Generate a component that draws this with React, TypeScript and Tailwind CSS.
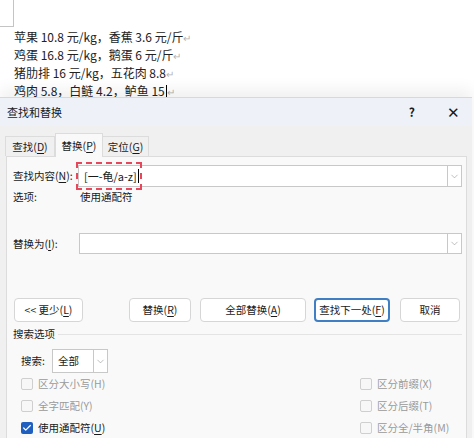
import { Check, ChevronDown } from "lucide-react";

const font = { fontFamily: '"Noto Sans CJK SC", "Noto Sans", sans-serif' };

const docLines = [
  "苹果 10.8 元/kg，香蕉 3.6 元/斤",
  "鸡蛋 16.8 元/kg，鹅蛋 6 元/斤",
  "猪肋排 16 元/kg，五花肉 8.8",
];

function Key({ k }: { k: string }) {
  return (
    <>
      (<span className="underline underline-offset-2">{k}</span>)
    </>
  );
}

function Chevron({ className = "" }: { className?: string }) {
  return (
    <div className={`flex items-center justify-center border-l border-[#c8c8c8] ${className}`}>
      <ChevronDown size={11} strokeWidth={1.2} className="text-[#8a8a8a]" />
    </div>
  );
}

function Btn({ w, ml, focus, children }: { w: string; ml: string; focus?: boolean; children: React.ReactNode }) {
  return (
    <div
      className={`${w} ${ml} flex h-[24px] items-center justify-center whitespace-nowrap rounded-[4px] bg-white ${
        focus ? "border-2 border-[#3f7fc4]" : "border border-[#d6d6d6]"
      }`}
    >
      {children}
    </div>
  );
}

function Box({ label, checked, disabled }: { label: React.ReactNode; checked?: boolean; disabled?: boolean }) {
  return (
    <div className="flex h-[22px] items-center gap-[5px] whitespace-nowrap">
      {checked ? (
        <div className="flex h-[12px] w-[12px] items-center justify-center rounded-[2px] bg-[#1f5fbf]">
          <Check size={10} strokeWidth={3} className="text-white" />
        </div>
      ) : (
        <div className="h-[12px] w-[12px] rounded-[2px] border border-[#cfcfcf] bg-[#f7f7f7]" />
      )}
      <span className={disabled ? "text-[#9a9a9a]" : "text-[#1a1a1a]"}>{label}</span>
    </div>
  );
}

export default function App() {
  return (
    <div className="relative h-[438px] w-[474px] overflow-hidden bg-white text-[#1a1a1a]" style={font}>
      <div className="absolute left-0 top-0 h-[27px] w-[14px] border-b border-r border-[#c4c4c4]" />

      <div className="h-[97px] pl-[14px] pt-[28px] text-[12px] leading-[17px] text-[#222]">
        {docLines.map((l) => (
          <div key={l}>
            {l}
            <span className="text-[10px] text-[#b5b5b5]">↵</span>
          </div>
        ))}
        <div>
          鸡肉 5.8，白鲢 4.2，鲈鱼 15
          <span className="ml-[1px] inline-block h-[13px] w-[1px] translate-y-[2px] bg-black" />
          <span className="text-[10px] text-[#b5b5b5]">↵</span>
        </div>
      </div>

      <div className="relative w-[472px] border-t border-[#d8d8d8] bg-[#f0f0f0] text-[10.5px] shadow-[0_-8px_14px_rgba(0,0,0,0.06)]">
        <div className="flex h-[28px] items-center bg-[#eef2f8] pl-[7px] pr-[12px] text-[11px]">
          <span>查找和替换</span>
          <span className="ml-auto mr-[32px] text-[12px] font-bold">?</span>
          <span className="text-[15px] font-light">✕</span>
        </div>

        <div className="flex h-[30px] items-end pl-[5px] pt-[6px] whitespace-nowrap">
          <div className="flex h-[20px] w-[50px] items-center justify-center border border-b-0 border-[#dcdcdc] bg-[#f0f0f0]">
            查找<Key k="D" />
          </div>
          <div className="relative z-10 -mb-[1px] flex h-[24px] w-[48px] items-center justify-center border border-b-0 border-[#dcdcdc] bg-[#f9f9f9]">
            替换<Key k="P" />
          </div>
          <div className="flex h-[20px] w-[46px] items-center justify-center border border-b-0 border-l-0 border-[#dcdcdc] bg-[#f0f0f0]">
            定位<Key k="G" />
          </div>
        </div>

        <div className="ml-[6px] mr-[5px] h-[300px] border border-[#dcdcdc] bg-[#f9f9f9] pl-[6px] pr-[4px] pt-[8px] whitespace-nowrap">
          <div className="flex h-[22px] items-center">
            <span className="w-[65px]">
              查找内容<Key k="N" />:
            </span>
            <div className="relative flex h-[22px] flex-1 items-center border border-[#c8c8c8] bg-white text-[11px]">
              <span className="pl-[5px]">[一-龟/a-z]</span>
              <span className="ml-[1px] h-[14px] w-[1px] bg-black" />
              <Chevron className="ml-auto h-full w-[14px]" />
              <div className="absolute -left-[3px] -top-[4px] h-[28px] w-[66px] border-2 border-dashed border-[#e8475b]" />
            </div>
          </div>

          <div className="mt-[2px] flex h-[16px] items-center">
            <span className="w-[67px]">选项:</span>
            <span>使用通配符</span>
          </div>

          <div className="mt-[28px] flex h-[21px] items-center">
            <span className="w-[66px]">
              替换为<Key k="I" />:
            </span>
            <div className="flex h-[21px] flex-1 items-center border border-[#c8c8c8] bg-white">
              <Chevron className="ml-auto h-full w-[14px]" />
            </div>
          </div>

          <div className="mt-[44px] flex h-[24px] items-center">
            <Btn w="w-[69px]" ml="ml-[1px]">
              &lt;&lt; 更少<Key k="L" />
            </Btn>
            <Btn w="w-[62px]" ml="ml-[46px]">
              替换<Key k="R" />
            </Btn>
            <Btn w="w-[106px]" ml="ml-[9px]">
              全部替换<Key k="A" />
            </Btn>
            <Btn w="w-[76px]" ml="ml-[8px]" focus>
              查找下一处<Key k="F" />
            </Btn>
            <Btn w="w-[60px]" ml="ml-[10px]">
              取消
            </Btn>
          </div>

          <div className="mt-[5px] flex h-[14px] items-center gap-[3px]">
            <span>搜索选项</span>
            <div className="h-px flex-1 bg-[#e4e4e4]" />
          </div>

          <div className="mt-[8px] grid grid-cols-[1fr_auto] pr-[4px]">
            <div className="pl-[8px]">
              <div className="flex h-[24px] items-center">
                <span className="w-[31px]">搜索:</span>
                <div className="flex h-[24px] w-[56px] items-center border border-[#c8c8c8] bg-white">
                  <span className="pl-[5px]">全部</span>
                  <Chevron className="ml-auto h-full w-[14px]" />
                </div>
              </div>
              <Box label="区分大小写(H)" disabled />
              <Box label="全字匹配(Y)" disabled />
              <Box
                label={
                  <>
                    使用通配符<Key k="U" />
                  </>
                }
                checked
              />
            </div>
            <div className="w-[98px]">
              <div className="h-[24px]" />
              <Box label="区分前缀(X)" disabled />
              <Box label="区分后缀(T)" disabled />
              <Box label="区分全/半角(M)" disabled />
            </div>
          </div>
        </div>
      </div>
    </div>
  );
}
